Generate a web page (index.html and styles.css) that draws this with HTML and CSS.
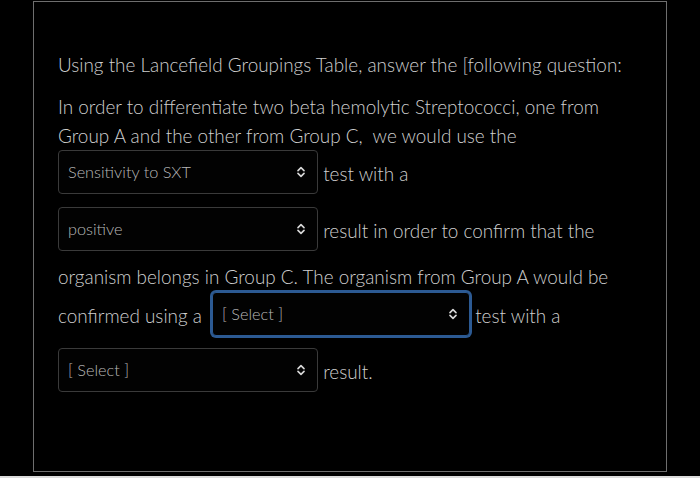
FILE: index.html
```html
<!DOCTYPE html>
<html lang="en">
<head>
<meta charset="utf-8">
<title>Question</title>
<link rel="stylesheet" href="styles.css">
</head>
<body>
<div class="page">
  <div class="quiz">
    <p class="q">Using the Lancefield Groupings Table, answer the [following question:</p>
    <p class="q">In order to differentiate two beta hemolytic Streptococci, one from Group A and the other from Group C,&nbsp; we would use the
      <span class="sel"><span class="val">Sensitivity to SXT</span><svg class="arr" width="8" height="12" viewBox="0 0 8 12"><path d="M1 4.6 L4 1.6 L7 4.6 M1 7.4 L4 10.4 L7 7.4" fill="none" stroke="currentColor" stroke-width="1.6" stroke-linecap="round" stroke-linejoin="round"/></svg></span> test with a
      <span class="sel"><span class="val">positive</span><svg class="arr" width="8" height="12" viewBox="0 0 8 12"><path d="M1 4.6 L4 1.6 L7 4.6 M1 7.4 L4 10.4 L7 7.4" fill="none" stroke="currentColor" stroke-width="1.6" stroke-linecap="round" stroke-linejoin="round"/></svg></span> result in order to confirm that the organism belongs in Group C. The organism from Group A would be confirmed using a
      <span class="sel sel-focus"><span class="val">[ Select ]</span><svg class="arr" width="8" height="12" viewBox="0 0 8 12"><path d="M1 4.6 L4 1.6 L7 4.6 M1 7.4 L4 10.4 L7 7.4" fill="none" stroke="currentColor" stroke-width="1.6" stroke-linecap="round" stroke-linejoin="round"/></svg></span> test with a
      <span class="sel"><span class="val">[ Select ]</span><svg class="arr" width="8" height="12" viewBox="0 0 8 12"><path d="M1 4.6 L4 1.6 L7 4.6 M1 7.4 L4 10.4 L7 7.4" fill="none" stroke="currentColor" stroke-width="1.6" stroke-linecap="round" stroke-linejoin="round"/></svg></span> result.</p>
  </div>
</div>
</body>
</html>
```
FILE: styles.css
```css
html {
  background: #dcdcdc;
}
body {
  margin: 0;
  background: #000;
  height: 476px;
  font-family: Lato, "Noto Sans", sans-serif;
  font-weight: 300;
  color: #cfcfcf;
}
.page {
  padding: 1px 0 0 33px;
}
.quiz {
  box-sizing: border-box;
  width: 634px;
  height: 471px;
  border: 1px solid #6e6e6e;
  padding: 49px 30px 0 24px;
}
.q {
  margin: 0 0 14px;
  font-size: 18.9px;
  line-height: 28.4px;
}
.sel {
  box-sizing: border-box;
  display: inline-flex;
  align-items: center;
  justify-content: space-between;
  width: 260px;
  height: 44px;
  padding: 0 12px 0 9px;
  margin: 0 0 12.6px;
  border: 1px solid #3a3a3a;
  border-radius: 4px;
  background: #020202;
  color: #b8b8b8;
  font-size: 16.3px;
  line-height: 20px;
  vertical-align: 3px;
}
.sel-focus {
  width: 258px;
  margin-left: 5px;
  border-color: #2c5a93;
  box-shadow: 0 0 0 2px #2c5a93;
}
.arr {
  color: #d8d8d8;
  flex: none;
}
```
